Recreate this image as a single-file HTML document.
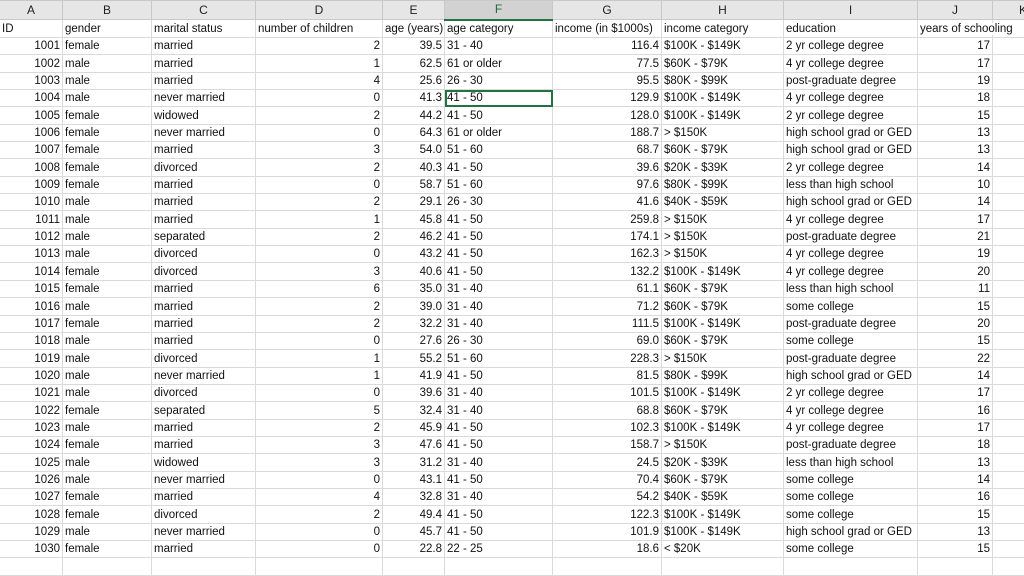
<!DOCTYPE html>
<html><head><meta charset="utf-8"><style>
*{margin:0;padding:0;box-sizing:border-box}
body{width:1024px;height:574px;overflow:hidden;background:#fff;font-family:"Liberation Sans",Arial,sans-serif;font-size:11.5px;color:#111}
table{border-collapse:collapse;table-layout:fixed;width:1024px;position:absolute;left:-1px;top:0}
td{border:1px solid #dadada;white-space:nowrap;overflow:visible;padding:0 2px;height:17.35px;line-height:15px;vertical-align:bottom}
td.r{text-align:right}
tr.h td{height:19px;background:#e6e6e6;text-align:center;border-color:#c8c8c8;vertical-align:middle;color:#222;font-size:12px}
tr.h td.sel{background:#d2d2d2;color:#1e6b3a;border-bottom:2px solid #217346}
tr.t td{height:18px}
td.x{outline:2px solid #217346;outline-offset:-2px}
</style></head><body>
<table>
<colgroup><col style="width:63px"><col style="width:89px"><col style="width:104px"><col style="width:127px"><col style="width:62px"><col style="width:108px"><col style="width:109px"><col style="width:122px"><col style="width:134px"><col style="width:75px"><col style="width:32px"></colgroup>
<tr class="h"><td>A</td><td>B</td><td>C</td><td>D</td><td>E</td><td class="sel">F</td><td>G</td><td>H</td><td>I</td><td>J</td><td style="text-align:left;padding-left:26px">K</td></tr>
<tr class="t"><td>ID</td><td>gender</td><td>marital status</td><td>number of children</td><td>age (years)</td><td>age category</td><td>income (in $1000s)</td><td>income category</td><td>education</td><td style="position:relative"><span style="position:relative;z-index:2;background:#fff">years of schooling</span></td><td></td></tr>
<tr><td class="r">1001</td><td>female</td><td>married</td><td class="r">2</td><td class="r">39.5</td><td>31 - 40</td><td class="r">116.4</td><td>$100K - $149K</td><td>2 yr college degree</td><td class="r">17</td><td></td></tr>
<tr><td class="r">1002</td><td>male</td><td>married</td><td class="r">1</td><td class="r">62.5</td><td>61 or older</td><td class="r">77.5</td><td>$60K - $79K</td><td>4 yr college degree</td><td class="r">17</td><td></td></tr>
<tr><td class="r">1003</td><td>male</td><td>married</td><td class="r">4</td><td class="r">25.6</td><td>26 - 30</td><td class="r">95.5</td><td>$80K - $99K</td><td>post-graduate degree</td><td class="r">19</td><td></td></tr>
<tr><td class="r">1004</td><td>male</td><td>never married</td><td class="r">0</td><td class="r">41.3</td><td class="x">41 - 50</td><td class="r">129.9</td><td>$100K - $149K</td><td>4 yr college degree</td><td class="r">18</td><td></td></tr>
<tr><td class="r">1005</td><td>female</td><td>widowed</td><td class="r">2</td><td class="r">44.2</td><td>41 - 50</td><td class="r">128.0</td><td>$100K - $149K</td><td>2 yr college degree</td><td class="r">15</td><td></td></tr>
<tr><td class="r">1006</td><td>female</td><td>never married</td><td class="r">0</td><td class="r">64.3</td><td>61 or older</td><td class="r">188.7</td><td>&gt; $150K</td><td>high school grad or GED</td><td class="r">13</td><td></td></tr>
<tr><td class="r">1007</td><td>female</td><td>married</td><td class="r">3</td><td class="r">54.0</td><td>51 - 60</td><td class="r">68.7</td><td>$60K - $79K</td><td>high school grad or GED</td><td class="r">13</td><td></td></tr>
<tr><td class="r">1008</td><td>female</td><td>divorced</td><td class="r">2</td><td class="r">40.3</td><td>41 - 50</td><td class="r">39.6</td><td>$20K - $39K</td><td>2 yr college degree</td><td class="r">14</td><td></td></tr>
<tr><td class="r">1009</td><td>female</td><td>married</td><td class="r">0</td><td class="r">58.7</td><td>51 - 60</td><td class="r">97.6</td><td>$80K - $99K</td><td>less than high school</td><td class="r">10</td><td></td></tr>
<tr><td class="r">1010</td><td>male</td><td>married</td><td class="r">2</td><td class="r">29.1</td><td>26 - 30</td><td class="r">41.6</td><td>$40K - $59K</td><td>high school grad or GED</td><td class="r">14</td><td></td></tr>
<tr><td class="r">1011</td><td>male</td><td>married</td><td class="r">1</td><td class="r">45.8</td><td>41 - 50</td><td class="r">259.8</td><td>&gt; $150K</td><td>4 yr college degree</td><td class="r">17</td><td></td></tr>
<tr><td class="r">1012</td><td>male</td><td>separated</td><td class="r">2</td><td class="r">46.2</td><td>41 - 50</td><td class="r">174.1</td><td>&gt; $150K</td><td>post-graduate degree</td><td class="r">21</td><td></td></tr>
<tr><td class="r">1013</td><td>male</td><td>divorced</td><td class="r">0</td><td class="r">43.2</td><td>41 - 50</td><td class="r">162.3</td><td>&gt; $150K</td><td>4 yr college degree</td><td class="r">19</td><td></td></tr>
<tr><td class="r">1014</td><td>female</td><td>divorced</td><td class="r">3</td><td class="r">40.6</td><td>41 - 50</td><td class="r">132.2</td><td>$100K - $149K</td><td>4 yr college degree</td><td class="r">20</td><td></td></tr>
<tr><td class="r">1015</td><td>female</td><td>married</td><td class="r">6</td><td class="r">35.0</td><td>31 - 40</td><td class="r">61.1</td><td>$60K - $79K</td><td>less than high school</td><td class="r">11</td><td></td></tr>
<tr><td class="r">1016</td><td>male</td><td>married</td><td class="r">2</td><td class="r">39.0</td><td>31 - 40</td><td class="r">71.2</td><td>$60K - $79K</td><td>some college</td><td class="r">15</td><td></td></tr>
<tr><td class="r">1017</td><td>female</td><td>married</td><td class="r">2</td><td class="r">32.2</td><td>31 - 40</td><td class="r">111.5</td><td>$100K - $149K</td><td>post-graduate degree</td><td class="r">20</td><td></td></tr>
<tr><td class="r">1018</td><td>male</td><td>married</td><td class="r">0</td><td class="r">27.6</td><td>26 - 30</td><td class="r">69.0</td><td>$60K - $79K</td><td>some college</td><td class="r">15</td><td></td></tr>
<tr><td class="r">1019</td><td>male</td><td>divorced</td><td class="r">1</td><td class="r">55.2</td><td>51 - 60</td><td class="r">228.3</td><td>&gt; $150K</td><td>post-graduate degree</td><td class="r">22</td><td></td></tr>
<tr><td class="r">1020</td><td>male</td><td>never married</td><td class="r">1</td><td class="r">41.9</td><td>41 - 50</td><td class="r">81.5</td><td>$80K - $99K</td><td>high school grad or GED</td><td class="r">14</td><td></td></tr>
<tr><td class="r">1021</td><td>male</td><td>divorced</td><td class="r">0</td><td class="r">39.6</td><td>31 - 40</td><td class="r">101.5</td><td>$100K - $149K</td><td>2 yr college degree</td><td class="r">17</td><td></td></tr>
<tr><td class="r">1022</td><td>female</td><td>separated</td><td class="r">5</td><td class="r">32.4</td><td>31 - 40</td><td class="r">68.8</td><td>$60K - $79K</td><td>4 yr college degree</td><td class="r">16</td><td></td></tr>
<tr><td class="r">1023</td><td>male</td><td>married</td><td class="r">2</td><td class="r">45.9</td><td>41 - 50</td><td class="r">102.3</td><td>$100K - $149K</td><td>4 yr college degree</td><td class="r">17</td><td></td></tr>
<tr><td class="r">1024</td><td>female</td><td>married</td><td class="r">3</td><td class="r">47.6</td><td>41 - 50</td><td class="r">158.7</td><td>&gt; $150K</td><td>post-graduate degree</td><td class="r">18</td><td></td></tr>
<tr><td class="r">1025</td><td>male</td><td>widowed</td><td class="r">3</td><td class="r">31.2</td><td>31 - 40</td><td class="r">24.5</td><td>$20K - $39K</td><td>less than high school</td><td class="r">13</td><td></td></tr>
<tr><td class="r">1026</td><td>male</td><td>never married</td><td class="r">0</td><td class="r">43.1</td><td>41 - 50</td><td class="r">70.4</td><td>$60K - $79K</td><td>some college</td><td class="r">14</td><td></td></tr>
<tr><td class="r">1027</td><td>female</td><td>married</td><td class="r">4</td><td class="r">32.8</td><td>31 - 40</td><td class="r">54.2</td><td>$40K - $59K</td><td>some college</td><td class="r">16</td><td></td></tr>
<tr><td class="r">1028</td><td>female</td><td>divorced</td><td class="r">2</td><td class="r">49.4</td><td>41 - 50</td><td class="r">122.3</td><td>$100K - $149K</td><td>some college</td><td class="r">15</td><td></td></tr>
<tr><td class="r">1029</td><td>male</td><td>never married</td><td class="r">0</td><td class="r">45.7</td><td>41 - 50</td><td class="r">101.9</td><td>$100K - $149K</td><td>high school grad or GED</td><td class="r">13</td><td></td></tr>
<tr><td class="r">1030</td><td>female</td><td>married</td><td class="r">0</td><td class="r">22.8</td><td>22 - 25</td><td class="r">18.6</td><td>&lt; $20K</td><td>some college</td><td class="r">15</td><td></td></tr>
<tr><td></td><td></td><td></td><td></td><td></td><td></td><td></td><td></td><td></td><td></td><td></td></tr>
</table>
</body></html>
